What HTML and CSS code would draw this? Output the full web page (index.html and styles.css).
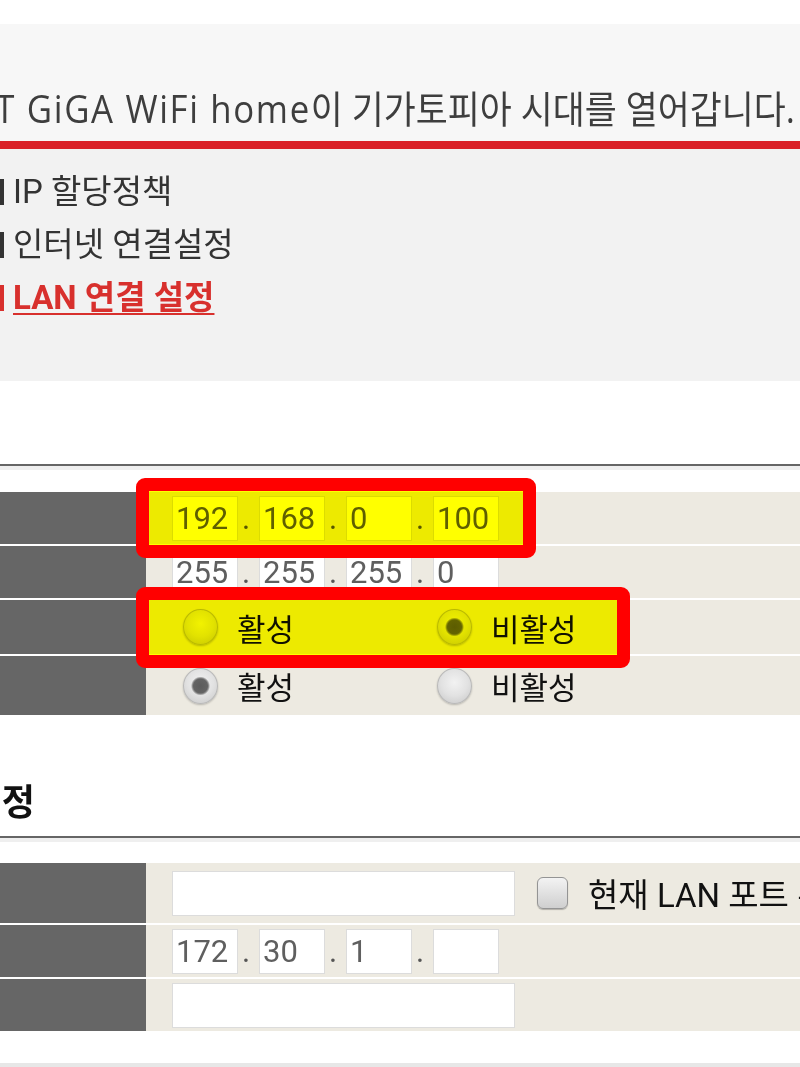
FILE: index.html
```html
<!DOCTYPE html>
<html lang="ko">
<head>
<meta charset="utf-8">
<title>LAN 연결 설정</title>
<link rel="stylesheet" href="styles.css">
</head>
<body>
<div class="page">
  <header class="brand">
    <span class="brand-text"><span class="en">KT GiGA WiFi home</span>이 기가토피아 시대를 열어갑니다.</span>
  </header>

  <nav class="menu">
    <ul>
      <li><span class="bar"></span>IP 할당정책</li>
      <li><span class="bar"></span>인터넷 연결설정</li>
      <li class="on"><a href="#"><span class="bar"></span>LAN 연결 설정</a></li>
    </ul>
  </nav>

  <section class="sec">
    <div class="sec-head sec-head-1"></div>
    <div class="tbl">
      <div class="row h52">
        <div class="lbl"></div>
        <div class="cell">
          <div class="ip">
            <input class="f" value="192"><span class="dot">.</span>
            <input class="f" value="168"><span class="dot">.</span>
            <input class="f" value="0"><span class="dot">.</span>
            <input class="f" value="100">
          </div>
        </div>
      </div>
      <div class="row h52">
        <div class="lbl"></div>
        <div class="cell">
          <div class="ip">
            <input class="f" value="255"><span class="dot">.</span>
            <input class="f" value="255"><span class="dot">.</span>
            <input class="f" value="255"><span class="dot">.</span>
            <input class="f" value="0">
          </div>
        </div>
      </div>
      <div class="row h54">
        <div class="lbl"></div>
        <div class="cell">
          <div class="opts">
            <label class="opt"><input class="radio" type="radio" name="r1">활성</label>
            <label class="opt"><input class="radio" type="radio" name="r1" checked>비활성</label>
          </div>
        </div>
      </div>
      <div class="row h59">
        <div class="lbl"></div>
        <div class="cell">
          <div class="opts">
            <label class="opt"><input class="radio" type="radio" name="r2" checked>활성</label>
            <label class="opt"><input class="radio" type="radio" name="r2">비활성</label>
          </div>
        </div>
      </div>

      <div class="hl hl-1"><div class="hl-fill"></div></div>
      <div class="hl hl-2"><div class="hl-fill"></div></div>
    </div>
  </section>

  <section class="sec">
    <div class="sec-head sec-head-2">
      <div class="title-clip"><h2 class="title">DHCP 서버 설정</h2></div>
    </div>
    <div class="tbl">
      <div class="row h60">
        <div class="lbl"></div>
        <div class="cell">
          <input class="f f-wide" value="">
          <label class="chk-label"><input class="chk" type="checkbox">현재 LAN 포트 주소 사용</label>
        </div>
      </div>
      <div class="row h52">
        <div class="lbl"></div>
        <div class="cell">
          <div class="ip">
            <input class="f" value="172"><span class="dot">.</span>
            <input class="f" value="30"><span class="dot">.</span>
            <input class="f" value="1"><span class="dot">.</span>
            <input class="f" value="">
          </div>
        </div>
      </div>
      <div class="row h52">
        <div class="lbl"></div>
        <div class="cell">
          <input class="f f-wide" value="">
        </div>
      </div>
    </div>
  </section>

  <div class="foot"></div>
</div>
</body>
</html>
```

FILE: styles.css
```css
html, body {
  margin: 0;
  padding: 0;
  background: #ffffff;
}

body {
  width: 800px;
  height: 1067px;
  overflow: hidden;
  font-family: Roboto, "Noto Sans CJK KR", sans-serif;
  color: #222;
}

.page {
  padding-top: 24px;
}

/* ---------- brand bar ---------- */
.brand {
  box-sizing: border-box;
  height: 125px;
  background: #f7f7f7;
  border-bottom: 8px solid #da2128;
  display: flex;
  justify-content: flex-end;
  align-items: flex-end;
  padding: 0 5px 9px 0;
  overflow: hidden;
}

.brand-text {
  display: inline-block;
  flex: none;
  white-space: nowrap;
  font-family: "Open Sans", "Noto Sans CJK KR", sans-serif;
  font-size: 38px;
  line-height: 48px;
  color: #3e3e3e;
  transform: scaleX(0.915);
  transform-origin: right center;
}

.brand-text .en {
  letter-spacing: 1.8px;
}

/* ---------- menu ---------- */
.menu {
  background: #f2f2f2;
  padding: 16px 0 57px;
}

.menu ul {
  list-style: none;
  margin: 0;
  padding: 0;
}

.menu li {
  font-size: 33px;
  line-height: 53px;
  color: #333;
  white-space: nowrap;
}

.bar {
  display: inline-block;
  width: 4px;
  height: 26px;
  margin-right: 9px;
  background: #333;
  vertical-align: -2px;
}

.menu li.on a {
  color: #d8302d;
  font-weight: bold;
  text-decoration: underline;
  text-decoration-thickness: 2px;
  text-underline-offset: 4px;
}

.menu li.on .bar {
  background: #d8302d;
}

/* ---------- sections ---------- */
.sec-head {
  border-bottom: 2px solid #666;
  box-shadow: 0 4px 0 #efefef;
}

.sec-head-1 {
  height: 83px;
}

.sec-head-2 {
  box-sizing: border-box;
  height: 123px;
  display: flex;
  flex-direction: column;
  justify-content: flex-end;
  padding-bottom: 15px;
}

.title-clip {
  width: 35px;
  overflow: hidden;
  display: flex;
  justify-content: flex-end;
}

.title {
  flex: none;
  margin: 0;
  white-space: nowrap;
  font-family: "Noto Sans CJK KR", sans-serif;
  font-size: 36px;
  line-height: 44px;
  font-weight: bold;
  color: #111;
}

/* ---------- tables ---------- */
.tbl {
  position: relative;
  display: flex;
  flex-direction: column;
  gap: 2px;
  margin-top: 26px;
}

.sec-head-2 + .tbl {
  margin-top: 25px;
}

.row {
  display: grid;
  grid-template-columns: 146px 1fr;
}

.h52 { height: 52px; }
.h54 { height: 54px; }
.h59 { height: 59px; }
.h60 { height: 60px; }

.lbl {
  background: #666666;
}

.cell {
  background: #edeae1;
  display: flex;
  align-items: center;
  padding-left: 26px;
  overflow: hidden;
  white-space: nowrap;
}

.ip {
  display: flex;
  align-items: baseline;
}

.f {
  box-sizing: border-box;
  width: 66px;
  height: 45px;
  margin: 0;
  padding: 0 0 0 3px;
  border: 1px solid #dcdcdc;
  border-radius: 0;
  background: #ffffff;
  font-family: Roboto, sans-serif;
  font-size: 31px;
  color: #5f5f5f;
  outline: none;
}

.f-wide {
  width: 343px;
}

.dot {
  box-sizing: border-box;
  width: 21px;
  padding-left: 4px;
  font-size: 31px;
  color: #555;
}

/* radios */
.opts {
  display: flex;
  margin-left: 11px;
}

.opt {
  display: flex;
  align-items: center;
  width: 254px;
  font-family: "Noto Sans CJK KR", sans-serif;
  font-size: 31px;
  color: #111;
}

.radio {
  appearance: none;
  -webkit-appearance: none;
  box-sizing: border-box;
  width: 35px;
  height: 36px;
  margin: 0 19px 0 0;
  border-radius: 50%;
  border: 1px solid #b9b9b9;
  background: radial-gradient(circle at 50% 40%, #f2f2f2 0, #e2e2e2 50%, #c6c6c6 100%);
  box-shadow: 0 1px 2px rgba(0, 0, 0, 0.22);
}

.radio:checked {
  background:
    radial-gradient(circle at 50% 50%, #5c5c5c 0, #646464 7px, #8a8a8a 8px, rgba(255, 255, 255, 0) 9.5px),
    radial-gradient(circle at 50% 40%, #f2f2f2 0, #e2e2e2 50%, #c6c6c6 100%);
}

/* checkbox */
.chk-label {
  display: flex;
  align-items: center;
  font-size: 33px;
  color: #111;
}

.chk {
  appearance: none;
  -webkit-appearance: none;
  box-sizing: border-box;
  width: 31px;
  height: 32px;
  margin: 0 20px 0 22px;
  border-radius: 6px;
  border: 1.5px solid #949494;
  background: linear-gradient(#f3f3f3, #cfcfcf);
  box-shadow: 0 1px 1px rgba(0, 0, 0, 0.25);
}

/* ---------- highlight annotations ---------- */
.hl {
  position: absolute;
  box-sizing: border-box;
  border: 13px solid #ff0000;
  border-radius: 9px;
}

.hl-1 {
  left: 136px;
  top: -14px;
  width: 400px;
  height: 80px;
}

.hl-2 {
  left: 136px;
  top: 95px;
  width: 494px;
  height: 81px;
}

.hl-fill {
  width: 100%;
  height: 100%;
  background: #ffff00;
  mix-blend-mode: multiply;
}

/* ---------- footer rule ---------- */
.foot {
  margin-top: 32px;
  border-top: 4px solid #e7e7e7;
}
```
